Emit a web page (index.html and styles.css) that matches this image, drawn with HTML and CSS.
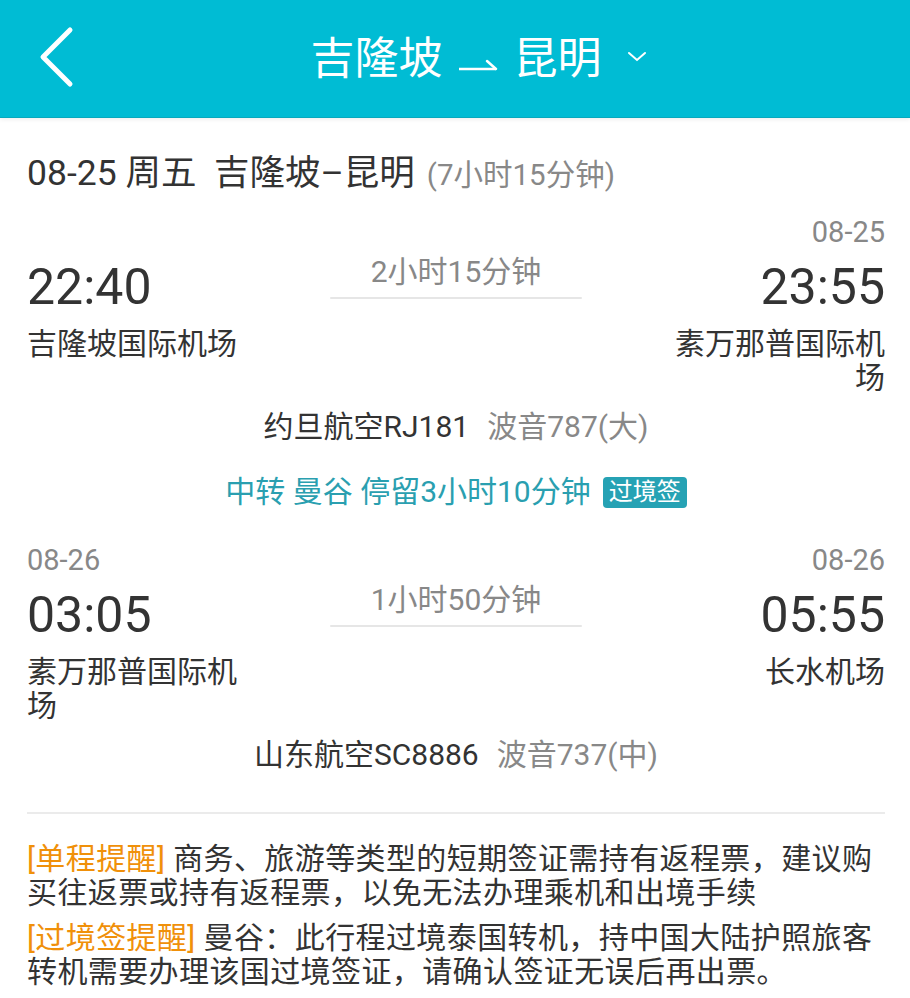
FILE: index.html
```html
<!DOCTYPE html>
<html lang="zh-CN">

<head>
    <meta charset="UTF-8">
    <meta name="viewport" content="width=device-width, initial-scale=1.0">
    <title>吉隆坡 - 昆明</title>
    <link rel="stylesheet" href="styles.css">
</head>

<body>
    <header class="topbar">
        <svg class="back" width="40" height="62" viewBox="0 0 40 62">
            <polyline points="33,4 6,31 33,58" fill="none" stroke="#fff" stroke-width="5" stroke-linecap="round" stroke-linejoin="round" />
        </svg>
        <div class="title">
            <span>吉隆坡</span>
            <svg class="route-arrow" width="40" height="18" viewBox="0 0 40 18">
                <line x1="1" y1="14" x2="38" y2="14" stroke="#fff" stroke-width="2.5" />
                <line x1="29" y1="6" x2="38" y2="14" stroke="#fff" stroke-width="2.5" stroke-linecap="round" />
            </svg>
            <span>昆明</span>
            <svg class="drop" width="22" height="12" viewBox="0 0 22 12">
                <polyline points="3,3 11,10 19,3" fill="none" stroke="#fff" stroke-width="2" stroke-linecap="round" />
            </svg>
        </div>
    </header>

    <main class="content">
        <div class="trip-head">08-25 周五&nbsp; 吉隆坡–昆明<span class="trip-total">(7小时15分钟)</span></div>

        <!-- first leg -->
        <section class="leg">
            <div class="leg-grid">
                <div class="date"></div>
                <div class="date right">08-25</div>
                <div class="time">22:40</div>
                <div class="mid">
                    <div class="dur">2小时15分钟</div>
                    <div class="dur-line"></div>
                </div>
                <div class="time right">23:55</div>
                <div class="port">吉隆坡国际机场</div>
                <div class="port right">素万那普国际机场</div>
            </div>
            <div class="flight">约旦航空RJ181<span class="plane">波音787(大)</span></div>
        </section>

        <div class="transfer">中转 曼谷 停留3小时10分钟<span class="badge">过境签</span></div>

        <!-- second leg -->
        <section class="leg second">
            <div class="leg-grid">
                <div class="date">08-26</div>
                <div class="date right">08-26</div>
                <div class="time">03:05</div>
                <div class="mid">
                    <div class="dur">1小时50分钟</div>
                    <div class="dur-line"></div>
                </div>
                <div class="time right">05:55</div>
                <div class="port">素万那普国际机场</div>
                <div class="port right">长水机场</div>
            </div>
            <div class="flight">山东航空SC8886<span class="plane">波音737(中)</span></div>
        </section>

        <div class="divider"></div>

        <div class="notes">
            <p><span class="tag">[单程提醒]</span> 商务、旅游等类型的短期签证需持有返程票，建议购买往返票或持有返程票，以免无法办理乘机和出境手续</p>
            <p><span class="tag">[过境签提醒]</span> 曼谷：此行程过境泰国转机，持中国大陆护照旅客转机需要办理该国过境签证，请确认签证无误后再出票。</p>
        </div>
    </main>
</body>

</html>
```

FILE: styles.css
```css
body {
    margin: 0;
    font-family: Roboto, "Noto Sans CJK SC", sans-serif;
    color: #333;
    background: #fff;
}

.topbar {
    height: 117px;
    background-color: #00bcd4;
    border-bottom: 1px solid #07a9bd;
    box-shadow: 0 2px 4px rgba(0, 0, 0, 0.06);
    display: flex;
    align-items: center;
    justify-content: center;
    position: relative;
}

.back {
    position: absolute;
    left: 37px;
    top: 26px;
}

.title {
    display: flex;
    align-items: center;
    margin-left: 48px;
    color: #fff;
    font-size: 44px;
    line-height: 56px;
}

.route-arrow {
    margin: 10px 16px 0 15px;
}

.drop {
    margin: -6px 0 0 24px;
}

.content {
    padding: 0 25px 0 27px;
}

.trip-head {
    margin-top: 35px;
    font-size: 35.5px;
    line-height: 40px;
}

.trip-total {
    margin-left: 12px;
    font-size: 29.5px;
    color: #888;
}

.leg {
    margin-top: 20px;
}

.leg.second {
    margin-top: 31px;
}

.leg-grid {
    display: grid;
    grid-template-columns: 1fr 252px 1fr;
    grid-template-rows: 34px auto auto;
}

.date {
    font-size: 29px;
    line-height: 34px;
    color: #888;
}

.date.right {
    grid-column: 3;
}

.time {
    margin-top: 10px;
    font-size: 50px;
    line-height: 56px;
}

.right {
    text-align: right;
    justify-self: end;
}

.mid {
    margin-top: 8px;
    text-align: center;
}

.dur {
    font-size: 30px;
    line-height: 30px;
    color: #888;
}

.dur-line {
    height: 2px;
    margin-top: 10px;
    background: #e6e6e6;
    border-radius: 1px;
}

.port {
    grid-column: 1;
    margin-top: 12px;
    max-width: 216px;
    font-size: 30px;
    line-height: 34px;
}

.port.right {
    grid-column: 3;
}

.flight {
    margin-top: 12px;
    text-align: center;
    font-size: 30px;
    line-height: 40px;
}

.plane {
    margin-left: 18px;
    color: #888;
}

.transfer {
    margin-top: 25px;
    text-align: center;
    font-size: 30px;
    line-height: 40px;
    color: #2a9fb0;
}

.badge {
    display: inline-block;
    margin-left: 12px;
    padding: 0 6px;
    font-size: 24px;
    line-height: 31px;
    color: #fff;
    background-color: #26a2b4;
    border-radius: 4px;
    vertical-align: 2px;
}

.divider {
    margin-top: 37px;
    height: 2px;
    background: #ebebeb;
}

.notes {
    margin-top: 28px;
    font-size: 30px;
    line-height: 34px;
    letter-spacing: 0.4px;
}

.notes p {
    margin: 0 0 11px;
}

.tag {
    color: #f0900a;
}
```
